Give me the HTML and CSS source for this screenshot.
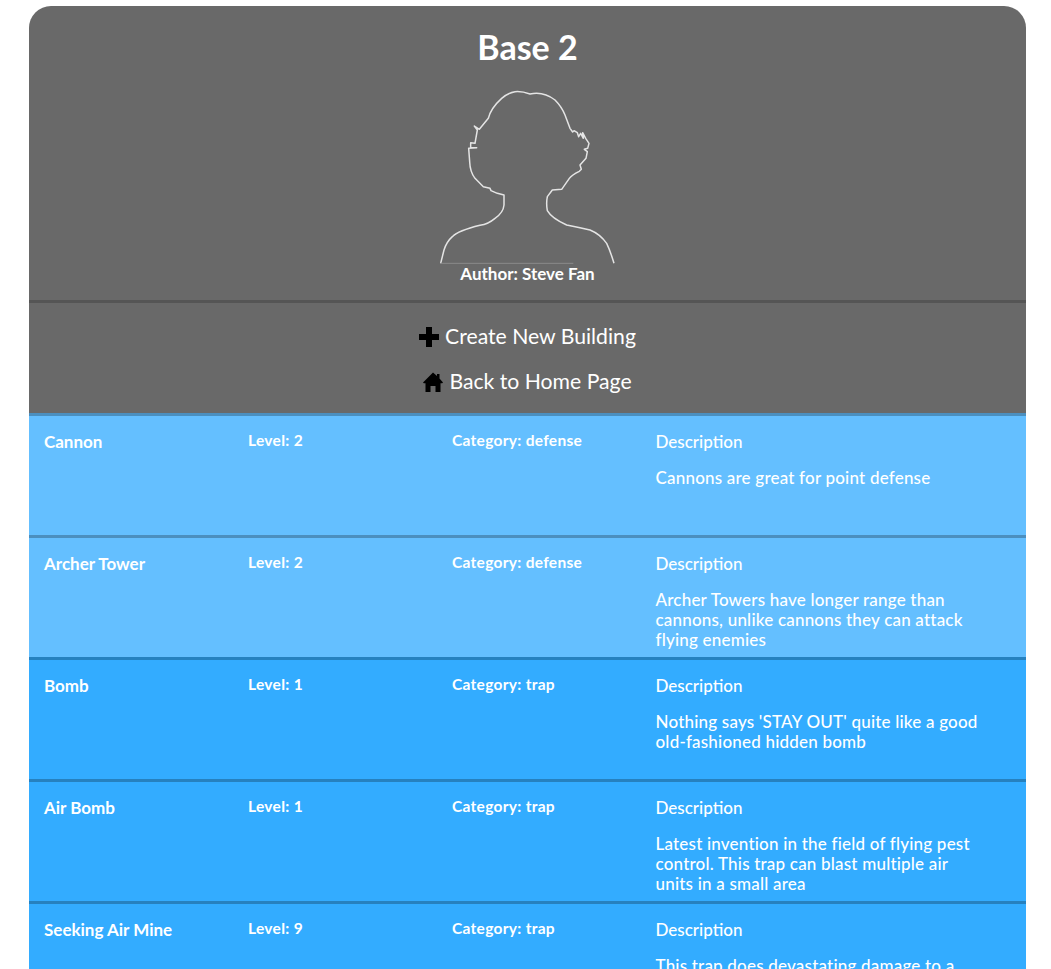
FILE: index.html
```html
<!DOCTYPE html>
<html lang="en">
<head>
<meta charset="utf-8">
<title>Base 2</title>
<link rel="stylesheet" href="styles.css">
</head>
<body>
<main class="base">
  <header class="head">
    <h1 class="title">Base 2</h1>
    <svg class="avatar" viewBox="60 30 525 525" aria-hidden="true">
      <path class="outline" d="M62 550L72 510Q80 485 97 470Q115 452 180 436Q205 432 225 415Q250 398 252 375L252 345L232 340L213 332L210 325L190 320L165 295Q150 275 149 245L146 205L170 203L152 203L152 188L165 190L172 150L163 138L178 148L205 115Q212 85 245 55Q265 38 285 35Q305 33 330 42Q370 33 405 60Q425 80 435 105L450 145L458 156L462 152L472 158L476 170L482 160L490 175L488 158L497 175L507 190L503 205L493 208L502 215L498 235L480 255L484 268L478 274Q455 285 448 295L425 328L397 330L382 350Q378 370 382 392Q395 415 440 435Q480 443 510 450Q540 462 560 490Q570 510 582 550"/>
      <path class="base-line" d="M62 550H460"/>
    </svg>
    <p class="author">Author: Steve Fan</p>
  </header>
  <nav class="actions">
    <a class="action" href="#">
      <svg class="icon" viewBox="0 0 20 20" aria-hidden="true"><path d="M7 0h6v7h7v6h-7v7H7v-7H0V7h7z"/></svg>
      Create New Building
    </a>
    <a class="action" href="#">
      <svg class="icon" viewBox="0 0 20 20" aria-hidden="true"><path d="M10 0.500L14 4V2h2.500v4.500L20 10.500l-.800.800H17.500V20h-5v-6h-5v6h-5v-8.700H.800L0 10.500z"/></svg>
      Back to Home Page
    </a>
  </nav>
  <section class="rows">
    <article class="row row-defense">
      <h2 class="name">Cannon</h2><p class="meta">Level: 2</p><p class="meta">Category: defense</p>
      <div class="desc"><h3 class="desc-title">Description</h3><p class="desc-text">Cannons are great for point defense</p></div>
    </article>
    <article class="row row-defense">
      <h2 class="name">Archer Tower</h2><p class="meta">Level: 2</p><p class="meta">Category: defense</p>
      <div class="desc"><h3 class="desc-title">Description</h3><p class="desc-text">Archer Towers have longer range than cannons, unlike cannons they can attack flying enemies</p></div>
    </article>
    <article class="row row-trap">
      <h2 class="name">Bomb</h2><p class="meta">Level: 1</p><p class="meta">Category: trap</p>
      <div class="desc"><h3 class="desc-title">Description</h3><p class="desc-text">Nothing says 'STAY OUT' quite like a good old-fashioned hidden bomb</p></div>
    </article>
    <article class="row row-trap">
      <h2 class="name">Air Bomb</h2><p class="meta">Level: 1</p><p class="meta">Category: trap</p>
      <div class="desc"><h3 class="desc-title">Description</h3><p class="desc-text">Latest invention in the field of flying pest control. This trap can blast multiple air units in a small area</p></div>
    </article>
    <article class="row row-trap">
      <h2 class="name">Seeking Air Mine</h2><p class="meta">Level: 9</p><p class="meta">Category: trap</p>
      <div class="desc"><h3 class="desc-title">Description</h3><p class="desc-text">This trap does devastating damage to a single air unit</p></div>
    </article>
  </section>
</main>
</body>
</html>
```
FILE: styles.css
```css
* { box-sizing: border-box; }
html, body { margin: 0; background: #fff; }
body { font-family: "Lato", "Open Sans", sans-serif; color: #fff; }
.base { width: 997px; margin: 6px 0 0 29px; border-radius: 22px 22px 0 0; overflow: hidden; background: #696969; }
.head { height: 297px; border-bottom: 3px solid #555; display: flex; flex-direction: column; align-items: center; padding-top: 21px; }
.title { margin: 0; font-size: 34px; line-height: 40px; font-weight: 700; }
.avatar { width: 175px; height: 175px; margin-top: 23px; display: block; }
.outline { fill: none; stroke: #e4e4e4; stroke-width: 4.500; stroke-linejoin: round; }
.base-line { fill: none; stroke: #8a8a8a; stroke-width: 3; }
.author { margin: -1px 0 0; font-size: 17px; line-height: 20px; font-weight: 700; }
.actions { height: 110px; display: flex; flex-direction: column; align-items: center; padding-top: 10px; }
.action { height: 45px; display: flex; align-items: center; gap: 6px; color: #fff; text-decoration: none; font-size: 21.200px; font-weight: 400; }
.icon { width: 20px; height: 20px; fill: #000; flex: none; position: relative; top: 1px; }
.row { height: 122px; border-top: 3px solid; display: grid; grid-template-columns: repeat(4, 204px); padding: 16px 0 0 15px; align-content: start; }
.row-defense { background: #64bfff; border-color: #4b8fbf; }
.row-trap { background: #33acff; border-color: #2681bf; }
.name { margin: 0; font-size: 17px; line-height: 20px; font-weight: 700; }
.meta { margin: 0; font-size: 15.500px; line-height: 17px; font-weight: 700; letter-spacing: .3px; }
.desc { width: 326px; margin-left: -.5px; }
.desc-title { margin: 0 0 16px; font-size: 17px; line-height: 20px; font-weight: 500; }
.desc-text { margin: 0; font-size: 17px; line-height: 20px; font-weight: 500; letter-spacing: .2px; }
```
